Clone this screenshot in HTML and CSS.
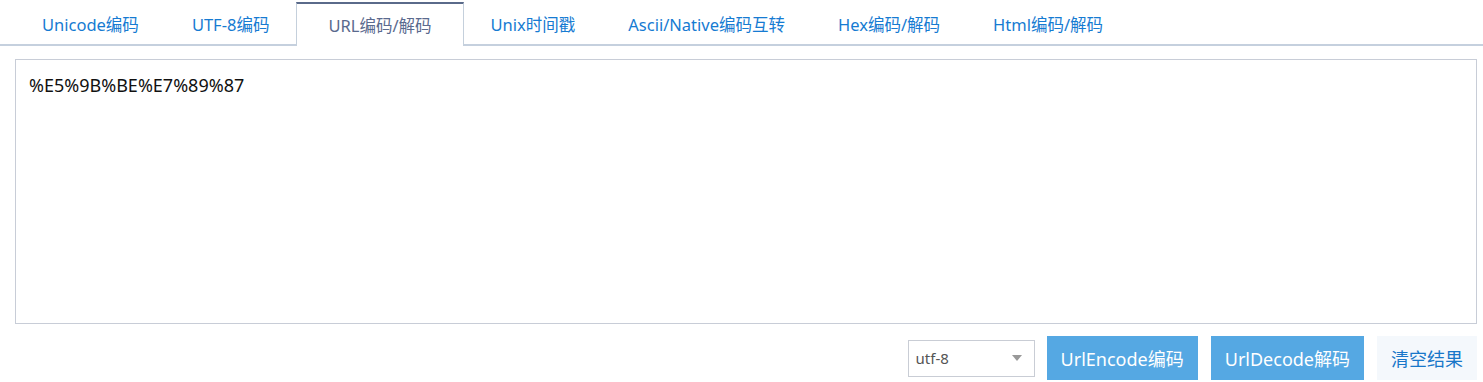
FILE: index.html
```html
<!DOCTYPE html>
<html lang="zh-CN">
<head>
<meta charset="utf-8">
<title>URL编码/解码</title>
<link rel="stylesheet" href="styles.css">
</head>
<body>
<ul class="tabs">
  <li class="tab">Unicode编码</li>
  <li class="tab">UTF-8编码</li>
  <li class="tab active">URL编码/解码</li>
  <li class="tab">Unix时间戳</li>
  <li class="tab">Ascii/Native编码互转</li>
  <li class="tab">Hex编码/解码</li>
  <li class="tab">Html编码/解码</li>
</ul>
<div class="content">
  <textarea class="editor" spellcheck="false">%E5%9B%BE%E7%89%87</textarea>
  <div class="controls">
    <div class="select"><span class="select-value">utf-8</span><span class="arrow"></span></div>
    <button class="btn primary">UrlEncode编码</button>
    <button class="btn primary">UrlDecode解码</button>
    <button class="btn light">清空结果</button>
  </div>
</div>
</body>
</html>
```
FILE: styles.css
```css
* { box-sizing: border-box; }
html, body { margin: 0; padding: 0; background: #fff; }
body {
  font-family: "Noto Sans", "Noto Sans CJK SC", sans-serif;
  color: #333;
}
.tabs {
  list-style: none;
  margin: 2px 0 0;
  padding: 0 0 0 15.5px;
  display: flex;
  border-bottom: 2px solid #c5d0de;
  height: 44px;
}
.tab {
  height: 44px;
  padding: 0 26.5px;
  display: flex;
  align-items: center;
  font-size: 16.5px;
  color: #167bd2;
  white-space: nowrap;
}
.tab.active {
  padding: 0 31.5px;
  height: 44px;
  margin-bottom: -2px;
  background: #fff;
  color: #5a6a8e;
  border-top: 2px solid #5a6a8a;
  border-left: 1px solid #c5d0dc;
  border-right: 1px solid #c5d0dc;
}
.content {
  padding: 13px 6px 0 15px;
}
.editor {
  display: block;
  width: 100%;
  height: 265px;
  margin: 0;
  border: 1px solid #c8cdd7;
  padding: 12px 13px;
  font-family: "Noto Sans", "Noto Sans CJK SC", sans-serif;
  font-size: 18px;
  line-height: 26px;
  color: #111;
  resize: none;
  outline: none;
  background: #fff;
}
.controls {
  margin-top: 12px;
  display: flex;
  justify-content: flex-end;
  align-items: center;
  gap: 13px;
}
.select {
  width: 127px;
  height: 37px;
  border: 1px solid #c9cdd5;
  display: flex;
  align-items: center;
  padding: 0 12px 0 7px;
  font-size: 15px;
  color: #555;
  margin-right: -1px;
}
.arrow {
  margin-left: auto;
  width: 0;
  height: 0;
  border-left: 5px solid transparent;
  border-right: 5px solid transparent;
  border-top: 6px solid #999;
}
.btn {
  height: 44px;
  border: none;
  padding: 0 14px;
  font-family: "Noto Sans", "Noto Sans CJK SC", sans-serif;
  font-size: 18px;
  cursor: pointer;
}
.btn.primary {
  background: #55a8e3;
  color: #fff;
}
.btn.light {
  background: #f4f8fc;
  color: #1877c9;
}
```
